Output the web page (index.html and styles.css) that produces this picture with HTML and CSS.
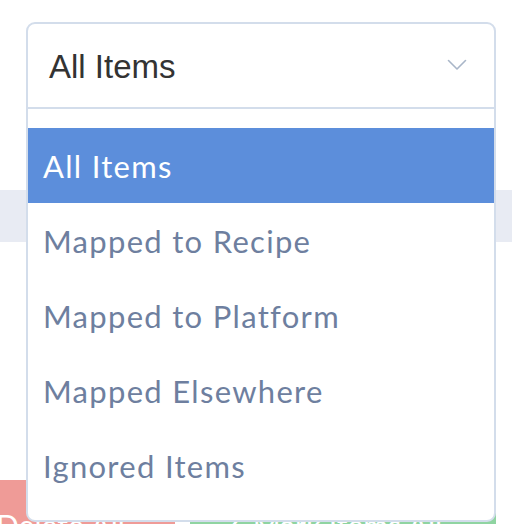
FILE: index.html
```html
<!DOCTYPE html>
<html>
<head>
<meta charset="utf-8">
<link rel="stylesheet" href="styles.css">
</head>
<body>
<div class="page">
  <div class="band"></div>
  <div class="actions">
    <div class="btn btn-delete">Delete All</div>
    <div class="btn btn-mark">✓ Mark Items All</div>
  </div>

  <div class="select">
    <div class="select-head">
      <span class="select-value">All Items</span>
      <svg class="chevron" width="20" height="12" viewBox="0 0 20 12"><path d="M1.5 1.5 L10 10 L18.5 1.5" fill="none" stroke="#a9b6c8" stroke-width="1.6" stroke-linecap="round" stroke-linejoin="round"/></svg>
    </div>
    <ul class="options">
      <li class="option active">All Items</li>
      <li class="option">Mapped to Recipe</li>
      <li class="option">Mapped to Platform</li>
      <li class="option">Mapped Elsewhere</li>
      <li class="option">Ignored Items</li>
    </ul>
  </div>
</div>
</body>
</html>
```

FILE: styles.css
```css
html, body {
  margin: 0;
  padding: 0;
  background: #ffffff;
}
.page {
  position: relative;
  width: 512px;
  height: 524px;
  overflow: hidden;
  display: flex;
  flex-direction: column;
}
.band {
  flex-shrink: 0;
  margin-top: 190px;
  height: 52px;
  background: #e8ebf3;
}
.actions {
  flex-shrink: 0;
  margin-top: 238px;
  display: flex;
  gap: 15px;
}
.btn {
  flex-shrink: 0;
  height: 60px;
  color: #ffffff;
  font-family: "Lato", sans-serif;
  font-size: 30px;
  line-height: 1;
  padding-top: 30px;
  box-sizing: border-box;
  white-space: nowrap;
  overflow: hidden;
}
.btn-delete {
  width: 175px;
  background: #ef9b97;
  text-indent: -4px;
}
.btn-mark {
  width: 306px;
  background: #8fd4a1;
  border-radius: 6px;
  padding-left: 30px;
}
.select {
  position: absolute;
  left: 26px;
  top: 22px;
  width: 470px;
  height: 500px;
  box-sizing: border-box;
  border: 2px solid #d3ddeb;
  border-radius: 9px;
  background: #ffffff;
}
.select-head {
  height: 83px;
  border-bottom: 2px solid #d3ddeb;
  display: flex;
  align-items: center;
  justify-content: space-between;
  padding: 0 27px 0 21px;
}
.select-value {
  font-family: "Liberation Sans", Arial, sans-serif;
  font-size: 33px;
  color: #333333;
  margin-top: 2px;
}
.chevron {
  margin-top: -2px;
}
.options {
  list-style: none;
  margin: 0;
  padding: 19px 0 0 0;
}
.option {
  height: 75px;
  display: flex;
  align-items: center;
  padding-left: 15px;
  font-family: "Lato", sans-serif;
  font-size: 31px;
  letter-spacing: 1.3px;
  color: #6e7f9f;
}
.option.active {
  background: #5c8edb;
  color: #ffffff;
}
```
